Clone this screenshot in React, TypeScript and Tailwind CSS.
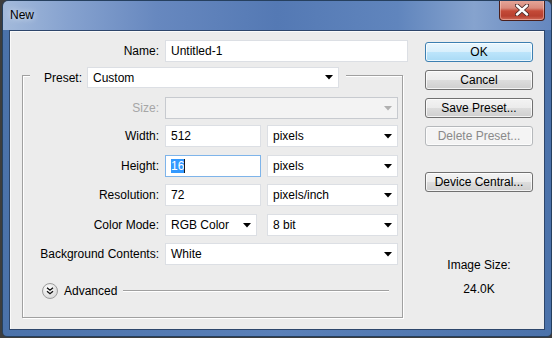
const Arrow = ({ disabled }: { disabled?: boolean }) => (
  <svg width="8" height="5" viewBox="0 0 8 5" className="shrink-0">
    <path d="M0 0h8L4 4.5z" fill={disabled ? "#b0b0b0" : "#000"} />
  </svg>
);

const Select = ({ value, className, disabled }: { value?: string; className: string; disabled?: boolean }) => (
  <div
    className={`flex h-[22px] items-center justify-between border pl-[5px] pr-[5px] ${
      disabled ? "border-[#c7cacf] bg-[#f3f3f3]" : "border-[#dcdfe4] bg-white"
    } ${className}`}
  >
    <span>{value}</span>
    <Arrow disabled={disabled} />
  </div>
);

const Field = ({ value, className }: { value: string; className: string }) => (
  <div className={`flex h-[22px] items-center border border-[#dcdfe4] bg-white pl-[5px] ${className}`}>{value}</div>
);

const Row = ({
  label,
  disabled,
  gap,
  children,
}: {
  label: string;
  disabled?: boolean;
  gap: string;
  children: React.ReactNode;
}) => (
  <div className={`flex h-[22px] items-center gap-[6px] ${gap}`}>
    <div className={`w-[136px] text-right ${disabled ? "text-[#a6a6a6]" : "text-black"}`}>{label}</div>
    {children}
  </div>
);

const Button = ({ label, kind, className }: { label: string; kind?: "primary" | "disabled"; className?: string }) => {
  const look =
    kind === "primary"
      ? "border-[#3c7fb1] bg-[linear-gradient(#e9f6fd_0%,#d8effc_50%,#bde5fb_50%,#a9daf5_100%)]"
      : kind === "disabled"
        ? "border-[#b5b8bb] bg-[#f4f4f4] text-[#8a8a8a]"
        : "border-[#707070] bg-[linear-gradient(#f3f3f3_0%,#ebebeb_50%,#dddddd_50%,#cfcfcf_100%)]";
  return (
    <div
      className={`flex h-[20px] w-[108px] items-center justify-center rounded-[3px] border shadow-[inset_0_0_0_1px_rgba(255,255,255,0.75)] ${look} ${className ?? ""}`}
    >
      {label}
    </div>
  );
};

export default function App() {
  return (
    <div className="flex h-[338px] w-[552px] overflow-hidden bg-[#3d3d3d] pl-[2px] font-['Liberation_Sans',Arial,sans-serif] text-[12px] leading-[14px] text-black">
      <div className="flex h-[337px] w-[550px] flex-col overflow-hidden rounded-t-[6px] rounded-b-[5px] border border-[#26405f]">
        {/* title bar */}
        <div className="flex h-[29px] shrink-0 items-start justify-between bg-[linear-gradient(90deg,#a3badb_0%,#86a2cf_12%,#6788bf_28%,#5479b4_50%,#6085bd_72%,#86a3ce_86%,#6587bf_100%)]">
          <div className="pl-[7px] pt-[7px] [text-shadow:0_0_6px_rgba(255,255,255,0.9)]">New</div>
          <div className="-mt-px mr-[6px] flex h-[21px] w-[46px] items-center justify-center rounded-b-[4px] border border-t-0 border-[#4a1f1c] bg-[linear-gradient(#e6a89b_0%,#d98a7c_40%,#c44a37_55%,#b8402f_80%,#d06a58_100%)] shadow-[inset_0_0_0_1px_rgba(255,220,210,0.45)]">
            <svg width="14" height="12" viewBox="0 0 14 12">
              <path d="M2 1.5l10 9M12 1.5l-10 9" stroke="#4a2a2a" strokeWidth="4.2" strokeLinecap="round" />
              <path d="M2 1.5l10 9M12 1.5l-10 9" stroke="#fff" strokeWidth="2.4" strokeLinecap="round" />
            </svg>
          </div>
        </div>

        {/* frame + client area */}
        <div className="flex flex-1 bg-[linear-gradient(90deg,#4b72aa_0%,#5a80b8_50%,#4b72aa_100%)] px-[6px] pb-[6px]">
          <div className="flex flex-1 border border-[#2d466b] bg-[#ececec] shadow-[inset_1px_1px_0_#fafafa]">
            {/* left column */}
            <div className="w-[398px]">
              <div className="mt-[9px] flex h-[22px] items-center gap-[6px]">
                <div className="w-[149px] text-right">Name:</div>
                <Field value="Untitled-1" className="w-[243px]" />
              </div>

              <div className="ml-[12px] mt-[13px] h-[243px] w-[381px] border border-[#a0a0a0] shadow-[1px_1px_0_#fff,inset_1px_1px_0_#fff]">
                <div className="-mt-[9px] ml-[7px] flex h-[21px] w-fit items-center gap-[5px] bg-[#ececec] pl-[14px] pr-[7px]">
                  <span>Preset:</span>
                  <Select value="Custom" className="h-[21px]! w-[252px]" />
                </div>

                <Row label="Size:" disabled gap="mt-[9px]">
                  <Select disabled className="w-[233px]" />
                </Row>
                <Row label="Width:" gap="mt-[6px]">
                  <Field value="512" className="w-[96px]" />
                  <Select value="pixels" className="w-[131px]" />
                </Row>
                <Row label="Height:" gap="mt-[8px]">
                  <div className="flex h-[22px] w-[96px] items-center border border-[#7eb4ea] bg-white pl-[5px]">
                    <span className="bg-[#3399ff] text-white">16</span>
                    <span className="h-[14px] w-px bg-[#1a1a1a]" />
                  </div>
                  <Select value="pixels" className="w-[131px]" />
                </Row>
                <Row label="Resolution:" gap="mt-[7px]">
                  <Field value="72" className="w-[96px]" />
                  <Select value="pixels/inch" className="w-[131px]" />
                </Row>
                <Row label="Color Mode:" gap="mt-[8px]">
                  <Select value="RGB Color" className="w-[92px]" />
                  <Select value="8 bit" className="ml-[4px] w-[131px]" />
                </Row>
                <Row label="Background Contents:" gap="mt-[7px]">
                  <Select value="White" className="w-[233px]" />
                </Row>

                <div className="mt-[18px] flex h-[16px] items-center pl-[19px] pr-[13px]">
                  <svg width="16" height="16" viewBox="0 0 16 16" className="shrink-0">
                    <defs>
                      <radialGradient id="adv" cx="0.4" cy="0.35" r="0.7">
                        <stop offset="0" stopColor="#ffffff" />
                        <stop offset="1" stopColor="#d6d6d6" />
                      </radialGradient>
                    </defs>
                    <circle cx="8" cy="8" r="7.5" fill="url(#adv)" stroke="#9c9c9c" />
                    <path d="M5 4.8l3 2.4 3-2.4M5 8.3l3 2.4 3-2.4" fill="none" stroke="#111" strokeWidth="1.4" />
                  </svg>
                  <span className="ml-[6px]">Advanced</span>
                  <div className="ml-[6px] h-[2px] flex-1 border-t border-b border-t-[#a0a0a0] border-b-white" />
                </div>
              </div>
            </div>

            {/* right column */}
            <div className="ml-[17px] flex w-[108px] flex-col pt-[11px]">
              <Button label="OK" kind="primary" />
              <Button label="Cancel" className="mt-[8px]" />
              <Button label="Save Preset..." className="mt-[8px]" />
              <Button label="Delete Preset..." kind="disabled" className="mt-[8px]" />
              <Button label="Device Central..." className="mt-[26px]" />
              <div className="mt-[66px] text-center">Image Size:</div>
              <div className="mt-[10px] text-center">24.0K</div>
            </div>
          </div>
        </div>
      </div>
    </div>
  );
}
